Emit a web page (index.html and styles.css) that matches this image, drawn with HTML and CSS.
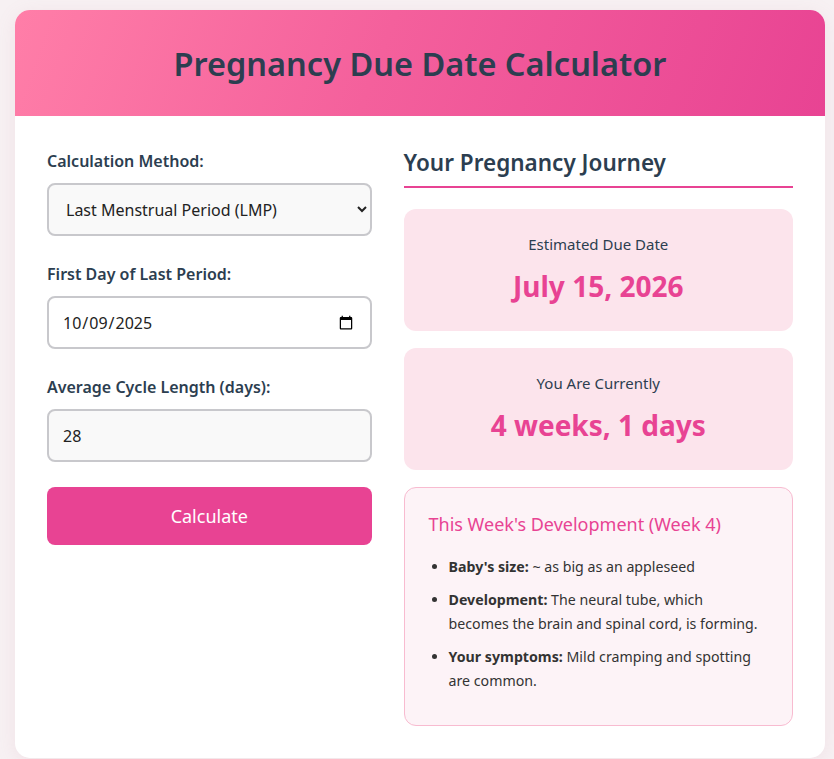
FILE: index.html
```html
<!DOCTYPE html>
<html lang="en">
<head>
<meta charset="utf-8">
<title>Pregnancy Due Date Calculator</title>
<link rel="stylesheet" href="styles.css">
</head>
<body>
<div class="container">
  <header class="header">
    <h1 class="title">Pregnancy Due Date Calculator</h1>
  </header>
  <main class="content">
    <section class="form-col">
      <div class="form-group">
        <label class="label" for="method">Calculation Method:</label>
        <select class="field field-grey field-select" id="method">
          <option>Last Menstrual Period (LMP)</option>
        </select>
      </div>
      <div class="form-group">
        <label class="label" for="lmp">First Day of Last Period:</label>
        <input class="field field-white" id="lmp" type="date" value="2025-10-09">
      </div>
      <div class="form-group">
        <label class="label" for="cycle">Average Cycle Length (days):</label>
        <input class="field field-grey" id="cycle" type="number" value="28">
      </div>
      <button class="btn" type="button">Calculate</button>
    </section>
    <section class="result-col">
      <h2 class="result-title">Your Pregnancy Journey</h2>
      <div class="card">
        <div class="card-label">Estimated Due Date</div>
        <div class="card-value">July 15, 2026</div>
      </div>
      <div class="card">
        <div class="card-label">You Are Currently</div>
        <div class="card-value">4 weeks, 1 days</div>
      </div>
      <div class="dev-card">
        <h3 class="dev-title">This Week's Development (Week 4)</h3>
        <ul class="dev-list">
          <li><strong>Baby's size:</strong> ~ as big as an appleseed</li>
          <li><strong>Development:</strong> The neural tube, which becomes the brain and spinal cord, is forming.</li>
          <li><strong>Your symptoms:</strong> Mild cramping and spotting are common.</li>
        </ul>
      </div>
    </section>
  </main>
</div>
</body>
</html>
```
FILE: styles.css
```css
* { box-sizing: border-box; }
html, body { margin: 0; padding: 0; }
body {
  background: #f7f1f3;
  font-family: "Noto Sans", "Open Sans", sans-serif;
  color: #2c3e50;
}
.container {
  width: 810px;
  margin: 10px 0 40px 15px;
  background: #ffffff;
  border-radius: 15px;
  overflow: hidden;
  box-shadow: 0 4px 20px rgba(200, 120, 150, 0.12);
}
.header {
  background: linear-gradient(110deg, #ff7ea8 0%, #f4609c 45%, #e84393 100%);
  height: 106px;
  display: flex;
  align-items: center;
  justify-content: center;
}
.title {
  margin: 0;
  font-size: 32.5px;
  font-weight: 600;
  color: #2c3e50;
}
.content {
  display: grid;
  grid-template-columns: 1fr 1.2fr;
  gap: 32px;
  padding: 32px 32px 32px;
}
.form-group { margin-bottom: 25px; }
.label {
  display: block;
  font-size: 16px;
  font-weight: 600;
  line-height: 26px;
  margin-bottom: 9px;
  color: #2c3e50;
}
.field {
  display: block;
  width: 100%;
  height: 53px;
  border: 2px solid #c8c8cc;
  border-radius: 8px;
  padding: 0 14px;
  font-family: "Noto Sans", "Open Sans", sans-serif;
  font-size: 16px;
  color: #222;
}
.field-grey { background: #f9f9f9; }
.field-white { background: #ffffff; padding-left: 13px; }
.field-select { padding-left: 13px; }
.btn {
  display: block;
  width: 100%;
  height: 58px;
  border: none;
  border-radius: 8px;
  background: #e84393;
  color: #ffffff;
  font-family: "Noto Sans", "Open Sans", sans-serif;
  font-size: 18px;
}
.result-title {
  margin: 0 0 21px;
  font-size: 22.5px;
  font-weight: 600;
  line-height: 30px;
  padding-bottom: 8px;
  border-bottom: 2px solid #e84393;
  color: #2c3e50;
}
.card {
  background: #fce4ec;
  border-radius: 12px;
  padding: 24px 20px;
  text-align: center;
  margin-bottom: 17px;
}
.card-label {
  font-size: 15px;
  line-height: 22px;
  margin-bottom: 10px;
  color: #2c3e50;
}
.card-value {
  font-size: 28px;
  line-height: 42px;
  font-weight: 700;
  color: #e84393;
}
.dev-card {
  background: #fdf3f7;
  border: 1px solid #f8bbd0;
  border-radius: 12px;
  padding: 24px 33px 23px 24px;
}
.dev-title {
  margin: 0;
  font-size: 18px;
  line-height: 24px;
  font-weight: 400;
  color: #e84393;
  white-space: nowrap;
}
.dev-list {
  margin: 19px 0 0;
  padding-left: 20px;
  color: #333333;
  font-size: 14.2px;
  line-height: 24px;
}
.dev-list li { margin-bottom: 9px; }
```
